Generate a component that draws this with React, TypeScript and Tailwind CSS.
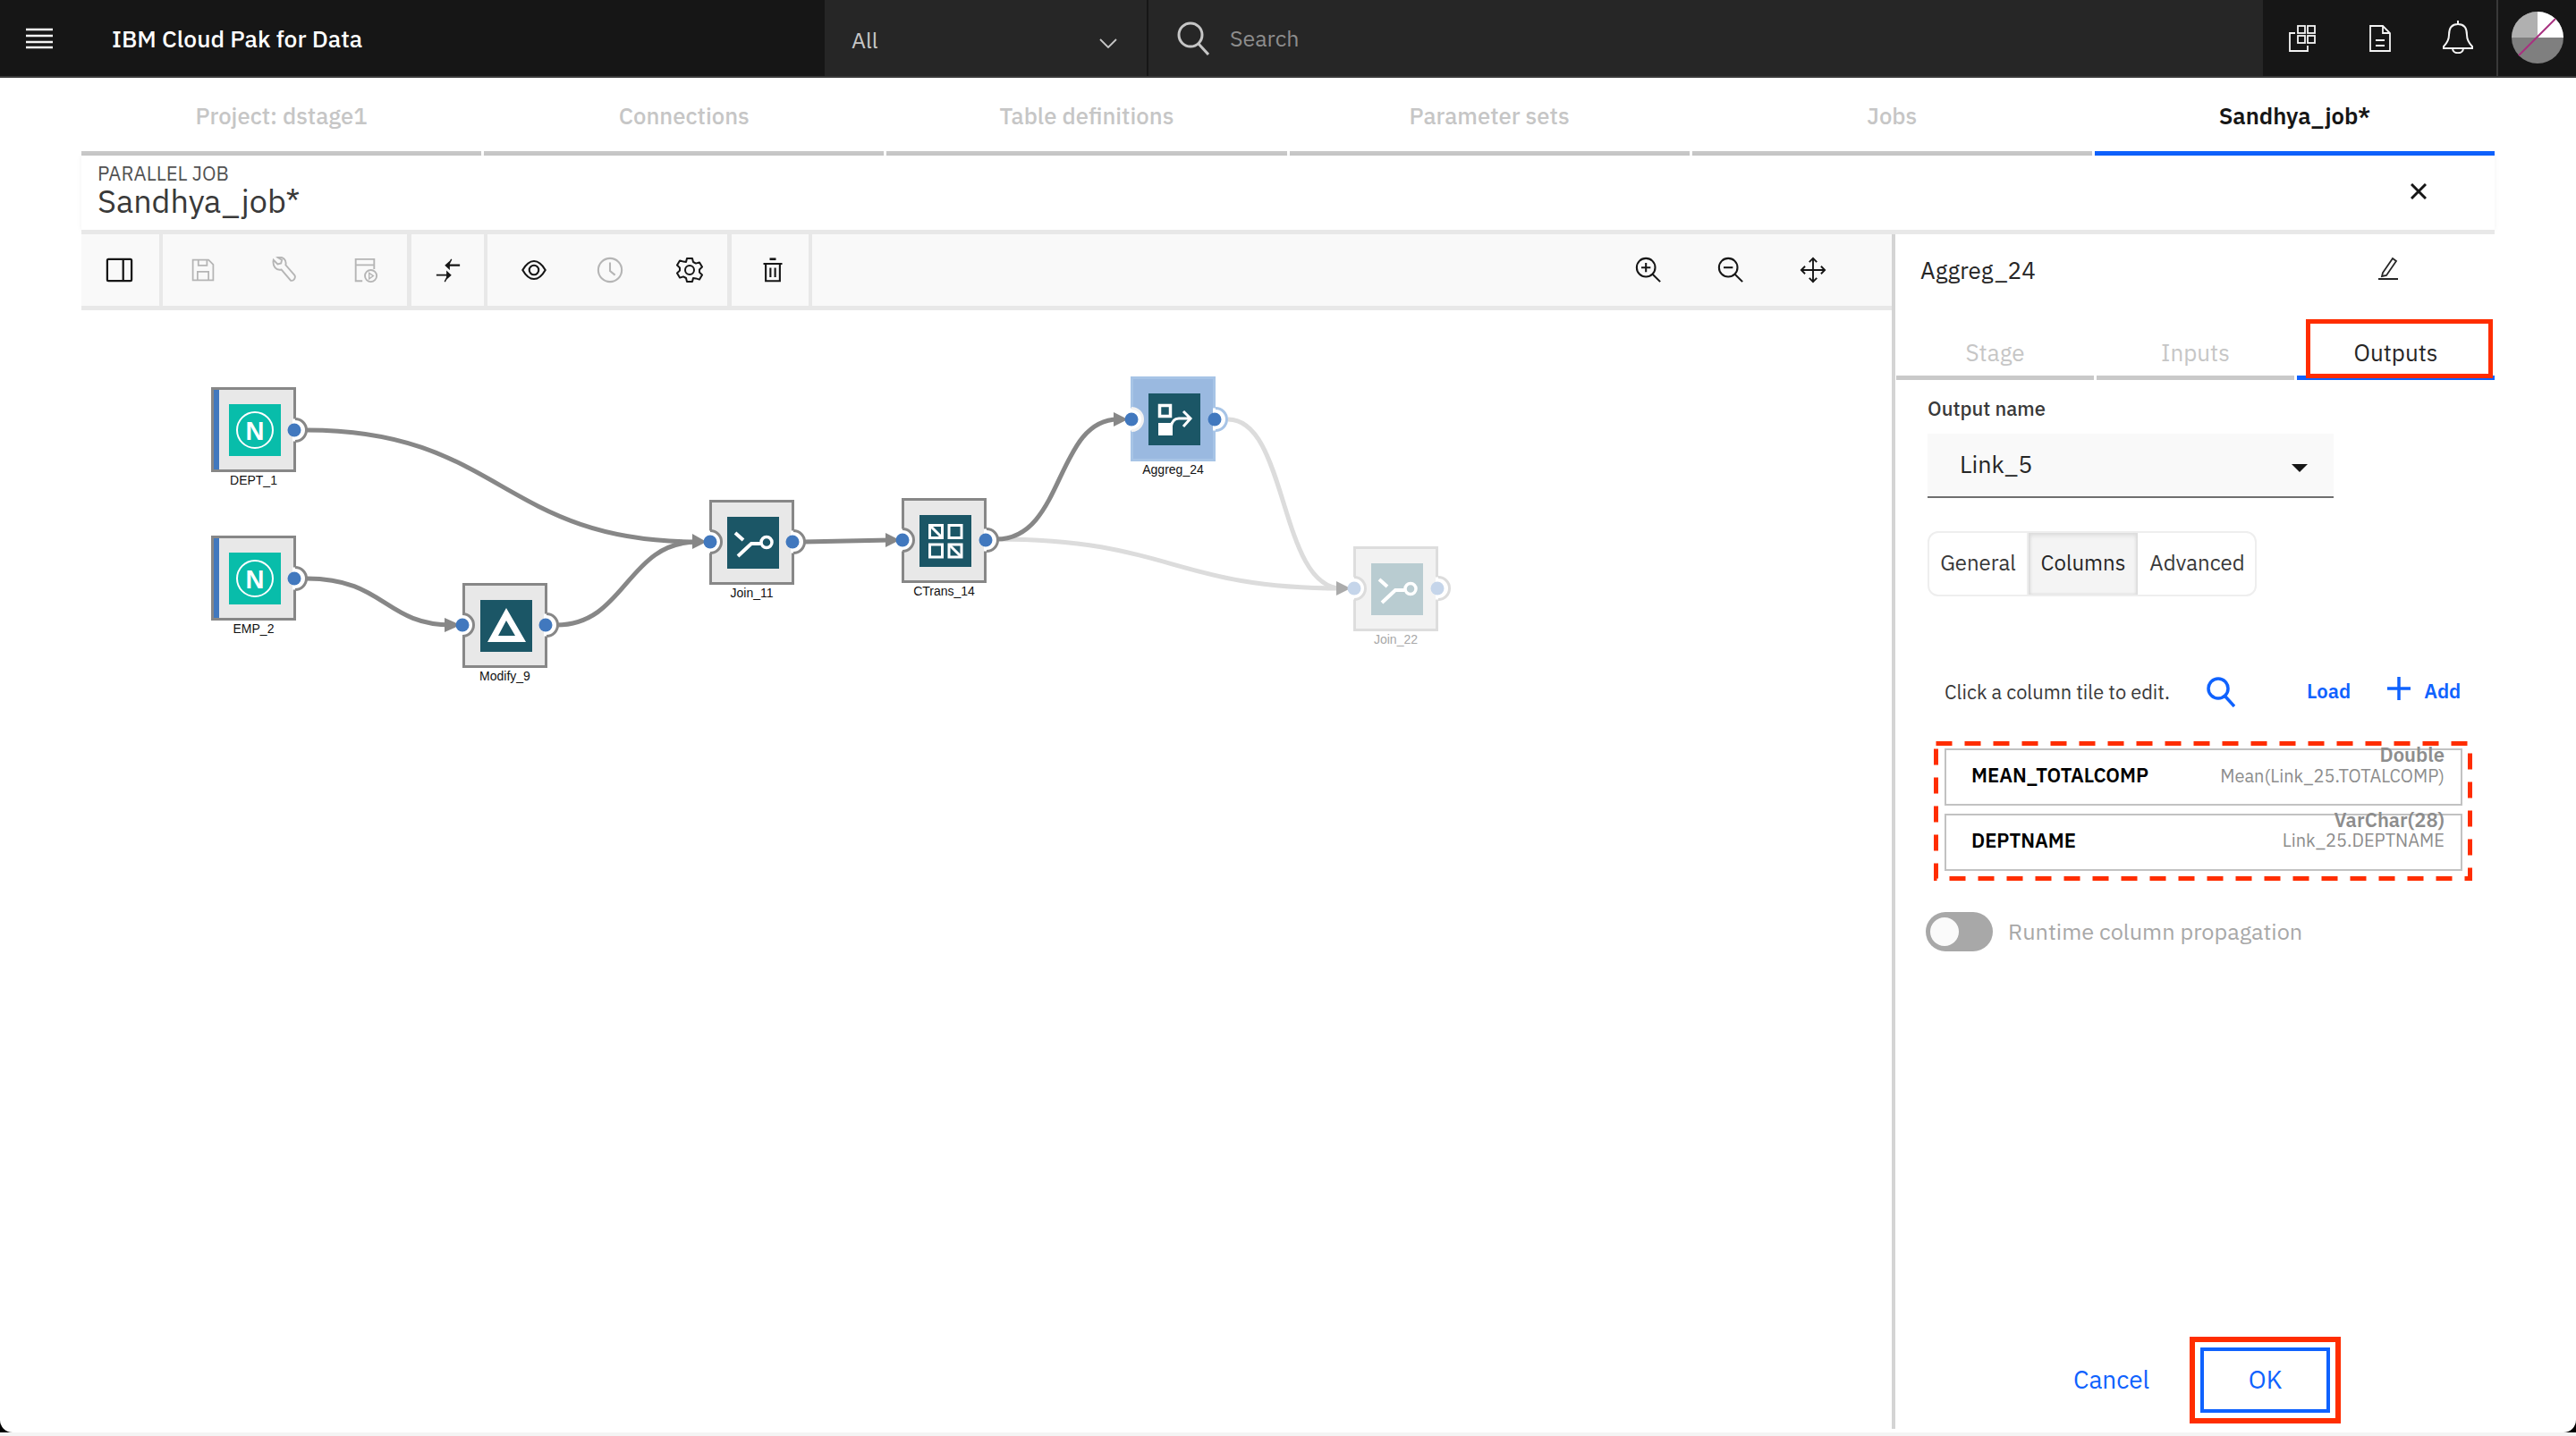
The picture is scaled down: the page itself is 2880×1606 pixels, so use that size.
import React from "react";

const LINK = "#878787";
const LIGHT = "#dcdcdc";

function Gear({ className = "" }: { className?: string }) {
  return (
    <svg viewBox="0 0 32 32" className={className} fill="none" stroke="currentColor" strokeWidth="2" strokeLinejoin="round">
      <path d="M13 3h6l1 4 3 1.600 4-1.200 3 5.200-3 2.800v3.200l3 2.800-3 5.200-4-1.200L20 25l-1 4h-6l-1-4-3-1.600-4 1.200-3-5.200 3-2.800v-3.200l-3-2.800 3-5.200 4 1.200L12 7z" />
      <circle cx="16" cy="16" r="5" />
    </svg>
  );
}

function ToolIcon({ kind, className = "" }: { kind: string; className?: string }) {
  const common = { viewBox: "0 0 32 32", fill: "none", stroke: "currentColor", strokeWidth: 2, className };
  switch (kind) {
    case "panel":
      return (
        <svg {...common} strokeWidth={2.4}>
          <rect x="1.500" y="3" width="29" height="26" rx="1.500" />
          <path d="M20.500 3v26" />
        </svg>
      );
    case "save":
      return (
        <svg {...common}>
          <path d="M3 3h20l6 6v20H3z" />
          <path d="M10 3v7h11V3M9 29V18h14v11" />
        </svg>
      );
    case "wrench":
      return (
        <svg {...common}>
          <path d="M4 4l5 5 4-1 1-4-5-3c6-1.500 11 3 9.500 9L29 22c2 2.500-.5 7.500-4.500 6.500L13.500 15.500C7.500 17 2.500 12 4 4z" />
        </svg>
      );
    case "run":
      return (
        <svg {...common}>
          <path d="M13 29H5V3h22v12M5 10h22" />
          <circle cx="23" cy="23" r="7" />
          <path d="M21 19.500v7l5-3.500z" strokeWidth="1.500" />
        </svg>
      );
    case "arrows":
      return (
        <svg viewBox="0 0 32 32" className={className} fill="currentColor">
          <path d="M30 9h-12V5l-6 5.500 6 5.500v-4.500h12zM2 21h12v-4.500l6 5.500-6 5.500V23H2z" />
          <path d="M20 3l-3 6M15 24l-3 6" stroke="currentColor" strokeWidth="1.500" />
        </svg>
      );
    case "eye":
      return (
        <svg {...common} strokeWidth={2.4}>
          <path d="M1.500 16C6 8 11 4.500 16 4.500S26 8 30.500 16C26 24 21 27.500 16 27.500S6 24 1.500 16z" />
          <circle cx="16" cy="16" r="6" />
        </svg>
      );
    case "clock":
      return (
        <svg {...common} strokeWidth={2.2}>
          <circle cx="16" cy="16" r="14" />
          <path d="M16 7v10l6 5" />
        </svg>
      );
    case "trash":
      return (
        <svg {...common} strokeWidth={2.4}>
          <path d="M4 8h24M7 8v22h18V8M13 13v12M19 13v12" />
          <path d="M12 2h8" strokeWidth={3} />
        </svg>
      );
    case "zoomin":
    case "zoomout":
      return (
        <svg {...common} strokeWidth={2.2}>
          <circle cx="13" cy="13" r="11" />
          <path d="M21 21l9 9" />
          <path d={kind === "zoomin" ? "M7.500 13h11M13 7.500v11" : "M7.500 13h11"} />
        </svg>
      );
    case "move":
      return (
        <svg {...common} strokeWidth={2}>
          <path d="M16 2v28M2 16h28" />
          <path d="M11.500 6.500L16 2l4.500 4.500M11.500 25.500L16 30l4.500-4.500M6.500 11.500L2 16l4.500 4.500M25.500 11.500L30 16l-4.500 4.500" />
        </svg>
      );
    default:
      return null;
  }
}

function ToolBtn({ kind, className }: { kind: string; className: string }) {
  return (
    <span className="flex h-full flex-1 items-center justify-center">
      <ToolIcon kind={kind} className={className} />
    </span>
  );
}

function Header() {
  return (
    <header className="flex h-[87px] shrink-0 border-b-[2px] border-[#393939] bg-[#161616] text-white">
      <div className="flex w-[87px] items-center justify-center">
        <svg viewBox="0 0 30 24" className="h-[24px] w-[30px]" fill="none" stroke="#f4f4f4" strokeWidth="2.500">
          <path d="M0 2h30M0 9h30M0 16h30M0 22h30" />
        </svg>
      </div>
      <div className="flex w-[835px] items-center pl-[38px] pt-[2px] font-['IBM_Plex_Sans',Roboto,sans-serif] text-[26.400px] font-medium">
        IBM Cloud Pak for Data
      </div>
      <div className="flex w-[362px] items-center justify-between border-r-[2px] border-[#161616] bg-[#262626] pl-[30px] pr-[33px] text-[25px] text-[#c6c6c6]">
        <span className="pt-[4px]">All</span>
        <svg viewBox="0 0 20 11" className="mt-[12px] h-[11px] w-[20px]" fill="none" stroke="#c6c6c6" strokeWidth="1.800">
          <path d="M1 1l9 9 9-9" />
        </svg>
      </div>
      <div className="flex flex-1 items-center gap-[23px] bg-[#262626] pl-[32px] text-[25px] text-[#8d8d8d]">
        <svg viewBox="0 0 36 38" className="h-[38px] w-[36px]" fill="none" stroke="#c6c6c6" strokeWidth="3">
          <circle cx="15" cy="15" r="13" />
          <path d="M24 25l11 12" />
        </svg>
        <span>Search</span>
      </div>
      <div className="flex w-[263px] shrink-0 items-center border-r-[2px] border-[#393939] pl-[1px]">
        <span className="flex w-[87px] justify-center">
          <svg viewBox="0 0 30 30" className="h-[30px] w-[30px]" fill="none" stroke="#f4f4f4" strokeWidth="1.800">
            <path d="M7 9H1v20h20v-6" />
            <rect x="10" y="1" width="8" height="8" />
            <rect x="21" y="1" width="8" height="8" />
            <rect x="10" y="12" width="8" height="8" />
            <rect x="21" y="12" width="8" height="8" />
          </svg>
        </span>
        <span className="flex w-[87px] justify-center">
          <svg viewBox="0 0 24 30" className="h-[30px] w-[24px]" fill="none" stroke="#f4f4f4" strokeWidth="1.800">
            <path d="M1 1h14l8 8v20H1zM15 1v8h8M7 17h10M7 23h10" />
          </svg>
        </span>
        <span className="flex w-[87px] justify-center">
          <svg viewBox="0 0 34 38" className="mb-[4px] h-[38px] w-[34px]" fill="none" stroke="#f4f4f4" strokeWidth="2">
            <path d="M17 1v4M17 5c-7 0-10 5-10 12 0 6-2 9-6 13v2h32v-2c-4-4-6-7-6-13 0-7-3-12-10-12zM11 32c0 7 12 7 12 0" />
          </svg>
        </span>
      </div>
      <div className="flex w-[87px] shrink-0 items-center justify-center">
        <svg viewBox="0 0 58 58" className="mb-[2px] h-[58px] w-[58px]">
          <circle cx="29" cy="29" r="29" fill="#7f7f7f" />
          <path d="M29 29H0A29 29 0 0 1 29 0z" fill="#b0b0b0" />
          <path d="M29 29V0a29 29 0 0 1 29 29z" fill="#ffffff" />
          <path d="M8 49L49 8" stroke="#a8307f" strokeWidth="2" />
        </svg>
      </div>
    </header>
  );
}

function Tab({ label, active }: { label: string; active?: boolean }) {
  return (
    <div className={`flex flex-1 items-center justify-center border-b-[5px] pt-[4px] ${active ? "border-[#0f62fe]" : "border-[#c9c9c9]"}`}>
      <span className={`text-[25.700px] ${active ? "font-semibold text-[#161616]" : "font-medium text-[#c6c6c6]"}`}>{label}</span>
    </div>
  );
}

function FlowNode({ pos, label, kind, faded, selected }: { pos: string; label: string; kind: string; faded?: boolean; selected?: boolean }) {
  const boxCls = selected
    ? "border-[#a7c4e6] bg-[#9ab9e0]"
    : faded
    ? "border-[#dddddd] bg-[#f2f2f2]"
    : "border-[#878787] bg-[#e8e8e8]";
  const iconBg = kind === "n" ? "bg-[#08bdaa]" : faded ? "bg-[#b9ccd1]" : "bg-[#1b5666]";
  return (
    <div className={`absolute h-[95px] w-[95px] ${pos}`}>
      <div className={`relative flex h-full w-full items-center justify-center border-[3px] ${boxCls}`}>
        {kind === "n" && <span className="absolute bottom-0 left-0 top-0 w-[6px] bg-[#4178be]" />}
        <span className={`relative left-[1px] flex h-[58px] w-[58px] ${iconBg}`}>
          <svg viewBox="0 0 58 58" className="h-[58px] w-[58px]" fill="none" stroke="#ffffff">
            {kind === "n" && (
              <>
                <circle cx="29" cy="29" r="20" strokeWidth="2" />
                <text x="29" y="39.500" textAnchor="middle" fill="#ffffff" stroke="none" fontFamily="Liberation Sans, sans-serif" fontWeight="700" fontSize="29">N</text>
              </>
            )}
            {kind === "join" && (
              <>
                <path d="M9 18l9 8M12 44l15-14h10" strokeWidth="4" />
                <circle cx="44" cy="28.500" r="6" strokeWidth="3.500" />
              </>
            )}
            {kind === "modify" && (
              <path d="M29 9L51 47H8zM29 23L20 40H39z" fill="#ffffff" fillRule="evenodd" stroke="none" />
            )}
            {kind === "ctrans" && (
              <g strokeWidth="3">
                <rect x="11.500" y="11.500" width="14" height="14" />
                <rect x="33" y="11.500" width="14" height="14" />
                <rect x="11.500" y="33" width="14" height="14" />
                <rect x="33" y="33" width="14" height="14" />
                <path d="M12 12l13 13M34 34l13 13" strokeWidth="3" />
              </g>
            )}
            {kind === "aggreg" && (
              <>
                <rect x="12.500" y="13.500" width="12" height="12" strokeWidth="3.500" />
                <path d="M11 33h14l2-2v16H11z" fill="#ffffff" stroke="none" />
                <path d="M25 38c1-7 4-10 9-10h12M39 20l8 8-8 9" strokeWidth="3" />
              </>
            )}
          </svg>
        </span>
      </div>
      <div className={`absolute left-[-20px] right-[-20px] top-[96px] text-center font-['Liberation_Sans',sans-serif] text-[14px] leading-[17px] ${faded ? "text-[#a8a8a8]" : "text-[#111111]"}`}>{label}</div>
    </div>
  );
}

function Port({ x, y, side, ring, dot, fill = "#ffffff" }: { x: number; y: number; side: "in" | "out"; ring: string; dot: string; fill?: string }) {
  const r = 12.5;
  return (
    <g>
      <path d={`M${x - 3} ${y - r}H${x}A${r} ${r} 0 0 1 ${x} ${y + r}H${x - 3}z`} fill={fill} />
      <path d={`M${x} ${y - r}A${r} ${r} 0 0 1 ${x} ${y + r}`} fill="none" stroke={ring} strokeWidth="3" />
      <circle cx={side === "in" ? x : x - 1} cy={y} r="7.500" fill={dot} />
    </g>
  );
}

function Links() {
  return (
    <svg viewBox="0 0 2024 1254" className="pointer-events-none absolute left-0 top-0 h-[1254px] w-[2024px]" fill="none">
      <g transform="translate(-91 -347)">
        <g stroke={LIGHT} strokeWidth="5">
          <path d="M1114 603C1310 603 1310 658 1500 658" />
          <path d="M1373 469C1440 469 1430 658 1500 658" />
        </g>
        <g stroke={LINK} strokeWidth="5">
          <path d="M343 481C560 481 560 606 780 606" />
          <path d="M343 647C430 647 430 699 505 699" />
          <path d="M622 699C700 699 700 606 780 606" />
          <path d="M898 606L995 604" />
          <path d="M1114 603C1190 603 1180 469 1250 469" />
        </g>
        <g fill={LINK}>
          <path d="M774 597L790 606L774 614z" />
          <path d="M497 691L515 699L497 707z" />
          <path d="M990 596L1006 604L990 612z" />
          <path d="M1245 461L1261 469L1245 477z" />
        </g>
        <path d="M1494 650L1510 658L1494 666z" fill="#ababab" />
        <Port x={330} y={481} side="out" ring={LINK} dot="#4178be" />
        <Port x={330} y={647} side="out" ring={LINK} dot="#4178be" />
        <Port x={517} y={699} side="in" ring={LINK} dot="#4178be" />
        <Port x={611} y={699} side="out" ring={LINK} dot="#4178be" />
        <Port x={794} y={606} side="in" ring={LINK} dot="#4178be" />
        <Port x={887} y={606} side="out" ring={LINK} dot="#4178be" />
        <Port x={1009} y={604} side="in" ring={LINK} dot="#4178be" />
        <Port x={1103} y={604} side="out" ring={LINK} dot="#4178be" />
        <Port x={1265} y={469} side="in" ring="#f2f2f2" dot="#4178be" />
        <Port x={1359} y={469} side="out" ring="#a7c4e6" dot="#4178be" />
        <Port x={1514} y={658} side="in" ring={LIGHT} dot="#c5d5ea" />
        <Port x={1608} y={658} side="out" ring={LIGHT} dot="#c5d5ea" />
      </g>
    </svg>
  );
}

function ColumnRow({ name, type, src, srcCls }: { name: string; type: string; src: string; srcCls: string }) {
  return (
    <div className="relative flex h-[64px] items-center justify-between border-[2px] border-[#c2c2c2] pl-[28px] pr-[18px]">
      <span className="pb-[5px] text-[22px] font-semibold leading-[26px] text-black">{name}</span>
      <div className="absolute right-[18px] top-[-8px] flex flex-col items-end text-[#8d8d8d]">
        <span className="text-[22px] font-semibold leading-[26px]">{type}</span>
        <span className={`text-[20px] leading-[26px] ${srcCls}`}>{src}</span>
      </div>
    </div>
  );
}

function SidePanel() {
  return (
    <aside className="relative flex w-[670px] shrink-0 flex-col">
      <div className="flex h-[80px] shrink-0 items-center justify-between pl-[28px] pr-[106px] text-[26px] text-[#262626]">
        <span>Aggreg_24</span>
        <svg viewBox="0 0 26 26" className="mb-[4px] h-[26px] w-[26px]" fill="none" stroke="#262626" strokeWidth="1.800">
          <path d="M7 18L18 2l4 3-11 16-5 1zM2 25h22" />
        </svg>
      </div>
      <div className="flex h-[83px] shrink-0 gap-[3px] pl-[1px] text-[26px]">
        <div className="flex flex-1 items-center justify-center border-b-[5px] border-[#c9c9c9] pt-[26px] text-[#c6c6c6]">Stage</div>
        <div className="flex flex-1 items-center justify-center border-b-[5px] border-[#c9c9c9] pt-[26px] text-[#c6c6c6]">Inputs</div>
        <div className="flex flex-1 items-center justify-center border-b-[5px] border-[#0f62fe] pt-[26px] text-[#262626]">Outputs</div>
      </div>
      <div className="pl-[36px] pt-[19px] text-[22px] font-medium leading-[26px] text-[#393939]">Output name</div>
      <div className="ml-[36px] mt-[15px] flex h-[72px] w-[454px] items-center justify-between border-b-[2px] border-[#6f6f6f] bg-[#f9f9f9] pb-[2px] pl-[36px] pr-[29px] text-[27px] text-[#262626]">
        <span>Link_5</span>
        <svg viewBox="0 0 18 9" className="mt-[8px] h-[9px] w-[18px]" fill="#161616"><path d="M0 0h18l-9 9z" /></svg>
      </div>
      <div className="ml-[36px] mt-[37px] flex h-[73px] w-[368px] overflow-hidden rounded-[12px] border-[2px] border-[#eeeeee] text-[24px] text-[#393939]">
        <span className="flex w-[111px] items-center justify-center border-r-[2px] border-[#eeeeee] pb-[3px]">General</span>
        <span className="flex w-[122px] items-center justify-center bg-[#f4f4f4] pb-[3px] text-[#262626] shadow-[inset_0_3px_5px_#dcdcdc,inset_-2px_0_3px_#dcdcdc,inset_2px_0_3px_#dcdcdc]">Columns</span>
        <span className="flex flex-1 items-center justify-center pb-[3px] pl-[2px]">Advanced</span>
      </div>
      <div className="relative mt-[84px] flex h-[46px] items-center pl-[55px] text-[#0f62fe]">
        <span className="w-[293px] text-[21.800px] text-[#393939]">Click a column tile to edit.</span>
        <svg viewBox="0 0 32 34" className="h-[34px] w-[32px]" fill="none" stroke="#0f62fe" strokeWidth="3.500">
          <circle cx="13" cy="13" r="11" />
          <path d="M21 22l10 11" />
        </svg>
        <span className="mb-[4px] ml-[80px] text-[22px] font-semibold">Load</span>
        <svg viewBox="0 0 26 26" className="mb-[8px] ml-[41px] h-[26px] w-[26px]" fill="none" stroke="#0f62fe" strokeWidth="3.500"><path d="M13 0v26M0 13h26" /></svg>
        <span className="mb-[4px] ml-[15px] text-[22px] font-semibold">Add</span>
      </div>
      <div className="ml-[55px] mr-[36px] mt-[40px] flex flex-col gap-[9px]">
        <ColumnRow name="MEAN_TOTALCOMP" type="Double" src="Mean(Link_25.TOTALCOMP)" srcCls="mt-[-2px]" />
        <ColumnRow name="DEPTNAME" type="VarChar(28)" src="Link_25.DEPTNAME" srcCls="mt-[-3px]" />
      </div>
      <div className="ml-[34px] mt-[46px] flex items-center gap-[17px]">
        <span className="flex h-[44px] w-[75px] items-center rounded-full bg-[#a8a8a8] pl-[5px]">
          <span className="h-[32px] w-[32px] rounded-full bg-[#fafafa]" />
        </span>
        <span className="text-[25.300px] text-[#a8a8a8]">Runtime column propagation</span>
      </div>
      <div className="mb-[18px] mt-auto flex h-[73px] shrink-0 items-center pl-[199px] text-[#0f62fe]">
        <span className="mb-[2px] text-[28px]">Cancel</span>
        <span className="ml-[57px] flex h-[73px] w-[145px] items-center justify-center border-[4px] border-[#0f62fe] pb-[2px] text-[28px]">OK</span>
      </div>
      <div className="absolute left-[459px] top-[95px] h-[66px] w-[209px] border-[5px] border-[#ff2d00]" />
      <div className="absolute bottom-[6px] left-[329px] h-[97px] w-[169px] border-[6px] border-[#ff2d00]" />
      <svg viewBox="0 0 602 156" className="absolute left-[43px] top-[567px] h-[156px] w-[602px]" fill="none">
        <rect x="2.500" y="2.500" width="597" height="151" stroke="#ff2d00" strokeWidth="5" strokeDasharray="18 14" />
      </svg>
    </aside>
  );
}

export default function App() {
  return (
    <div className="h-[1606px] w-[2880px] overflow-hidden bg-black font-['IBM_Plex_Sans',Roboto,sans-serif]">
      <div className="flex h-[1602px] flex-col overflow-hidden rounded-b-[14px] bg-white">
        <Header />
        <main className="flex min-h-0 flex-1 flex-col pb-[4px] pl-[91px] pr-[91px]">
          <nav className="flex h-[87px] shrink-0 gap-[3px]">
            <Tab label="Project: dstage1" />
            <Tab label="Connections" />
            <Tab label="Table definitions" />
            <Tab label="Parameter sets" />
            <Tab label="Jobs" />
            <Tab label="Sandhya_job*" active />
          </nav>
          <section className="flex h-[83px] shrink-0 items-center justify-between bg-white pb-[4px] pl-[18px] pr-[76px] shadow-[0_0_6px_rgba(0,0,0,0.06)]">
            <div className="flex flex-col">
              <span className="text-[22px] leading-[24px] text-[#525252]">PARALLEL JOB</span>
              <span className="mt-[-1px] text-[36px] leading-[40px] text-[#393939]">Sandhya_job*</span>
            </div>
            <svg viewBox="0 0 18 18" className="h-[18px] w-[18px]" fill="none" stroke="#161616" strokeWidth="3"><path d="M1 1l16 16M17 1L1 17" /></svg>
          </section>
          <div className="h-[5px] shrink-0 bg-[#e8e8e8]" />
          <div className="flex min-h-0 flex-1">
            <div className="flex min-w-0 flex-1 flex-col border-r-[4px] border-[#d4d4d4]">
              <div className="flex h-[85px] shrink-0 border-b-[5px] border-[#e8e8e8] bg-[#f9f9f9]">
                <div className="flex w-[91px] items-center border-r-[4px] border-[#e8e8e8] pr-[2px]"><ToolBtn kind="panel" className="h-[30px] w-[33px] text-[#161616]" /></div>
                <div className="flex w-[278px] items-center border-r-[5px] border-[#e8e8e8] pr-[2px]">
                  <ToolBtn kind="save" className="h-[28px] w-[28px] text-[#b5b5b5]" />
                  <ToolBtn kind="wrench" className="h-[30px] w-[30px] text-[#b5b5b5]" />
                  <ToolBtn kind="run" className="h-[30px] w-[30px] text-[#b5b5b5]" />
                </div>
                <div className="flex w-[85px] items-center border-r-[4px] border-[#e8e8e8]"><ToolBtn kind="arrows" className="h-[30px] w-[30px] text-[#161616]" /></div>
                <div className="flex w-[273px] items-center border-r-[5px] border-[#e8e8e8]">
                  <span className="flex h-full flex-1 items-center justify-center pl-[10px]"><ToolIcon kind="eye" className="h-[28px] w-[32px] text-[#161616]" /></span>
                  <span className="flex h-full flex-1 items-center justify-center"><ToolIcon kind="clock" className="h-[30px] w-[30px] text-[#b5b5b5]" /></span>
                  <span className="flex h-full flex-1 items-center justify-center pl-[4px]"><Gear className="h-[32px] w-[32px] text-[#161616]" /></span>
                </div>
                <div className="flex w-[90px] items-center border-r-[4px] border-[#e8e8e8] pl-[6px]"><ToolBtn kind="trash" className="h-[32px] w-[28px] text-[#161616]" /></div>
                <div className="flex flex-1 items-center justify-end gap-[62px] pr-[73px]">
                  <ToolIcon kind="zoomin" className="h-[30px] w-[30px] text-[#161616]" />
                  <ToolIcon kind="zoomout" className="h-[30px] w-[30px] text-[#161616]" />
                  <ToolIcon kind="move" className="h-[30px] w-[30px] text-[#161616]" />
                </div>
              </div>
              <div className="relative flex-1">
                <FlowNode pos="left-[145px] top-[86px]" label="DEPT_1" kind="n" />
                <FlowNode pos="left-[145px] top-[252px]" label="EMP_2" kind="n" />
                <FlowNode pos="left-[426px] top-[305px]" label="Modify_9" kind="modify" />
                <FlowNode pos="left-[702px] top-[212px]" label="Join_11" kind="join" />
                <FlowNode pos="left-[917px] top-[210px]" label="CTrans_14" kind="ctrans" />
                <FlowNode pos="left-[1173px] top-[74px]" label="Aggreg_24" kind="aggreg" selected />
                <FlowNode pos="left-[1422px] top-[264px]" label="Join_22" kind="join" faded />
                <Links />
              </div>
            </div>
            <SidePanel />
          </div>
        </main>
      </div>
      <div className="h-[4px] bg-[#f4f4f4]" />
    </div>
  );
}
